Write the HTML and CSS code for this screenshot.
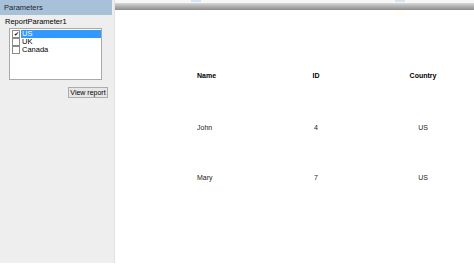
FILE: index.html
```html
<!DOCTYPE html>
<html>
<head>
  <title>Report Viewer</title>
  <link rel="stylesheet" href="styles.css">
</head>
<body>
  <div class="viewer">
    <div class="params">
      <div class="params-head">Parameters</div>
      <div class="param-label">ReportParameter1</div>
      <div class="listbox">
        <div class="item"><span class="check on">&#10004;</span><span class="txt sel">US</span></div>
        <div class="item"><span class="check"></span><span class="txt">UK</span></div>
        <div class="item"><span class="check"></span><span class="txt">Canada</span></div>
      </div>
      <div class="btn-row"><button class="view">View report</button></div>
    </div>
    <div class="report">
      <div class="topstrip"><span class="mark m1"></span><span class="mark m2"></span></div>
      <div class="toolbar"></div>
      <div class="data">
        <div class="cell head name">Name</div>
        <div class="cell head">ID</div>
        <div class="cell head">Country</div>
        <div class="cell name">John</div>
        <div class="cell">4</div>
        <div class="cell">US</div>
        <div class="cell name">Mary</div>
        <div class="cell">7</div>
        <div class="cell">US</div>
      </div>
    </div>
  </div>
</body>
</html>
```
FILE: styles.css
```css
html, body {
  margin: 0;
  padding: 0;
  background: #ffffff;
  font-family: "Liberation Sans", Arial, sans-serif;
  color: #000000;
}
.viewer {
  display: grid;
  grid-template-columns: 115px 1fr;
  height: 270px;
}
.params {
  background: #eeeeee;
  height: 263px;
  border-right: 1px solid #e2e2e2;
}
.params-head {
  height: 15px;
  background: #a9c0d9;
  margin-right: 2px;
  font-size: 7.5px;
  line-height: 15px;
  padding-left: 4px;
  color: #1b2633;
}
.param-label {
  font-size: 7.5px;
  margin: 2px 0 0 5px;
  height: 10px;
  line-height: 10px;
}
.listbox {
  margin: 1px 0 0 9px;
  width: 91px;
  height: 49px;
  background: #ffffff;
  border: 1px solid #a9a9a9;
  padding-top: 1px;
}
.item {
  display: flex;
  align-items: center;
  height: 8px;
  font-size: 7.5px;
  padding-left: 2px;
}
.check {
  width: 6px;
  height: 6px;
  border: 1px solid #8a8a8a;
  background: #ffffff;
  font-size: 6px;
  line-height: 6px;
  text-align: center;
  color: #000000;
  margin-right: 1px;
}
.txt {
  flex: 1;
  height: 8px;
  line-height: 8px;
  padding-left: 1px;
}
.txt.sel {
  background: #3399ff;
  color: #ffffff;
}
.btn-row {
  display: flex;
  justify-content: flex-end;
  padding: 7px 6px 0 0;
}
.view {
  font-family: "Liberation Sans", Arial, sans-serif;
  font-size: 7px;
  height: 11px;
  width: 40px;
  padding: 0;
  background: #e6e6e6;
  border: 1px solid #adadad;
  color: #000000;
}
.report {
  position: relative;
}
.topstrip {
  height: 3px;
  background: #f7f7f7;
}
.mark {
  position: absolute;
  top: 0;
  height: 2px;
  width: 10px;
  background: #d6e4f2;
}
.m1 { left: 76px; }
.m2 { left: 280px; }
.toolbar {
  height: 7px;
  background: linear-gradient(to bottom, #d8d8d8, #b0b0b0 50%, #8c8c8c);
}
.data {
  display: grid;
  grid-template-columns: 111px 108px 106px;
  grid-template-rows: 10px 52px 50px;
  margin: 61px 0 0 36px;
  font-size: 7px;
  color: #222222;
}
.cell {
  line-height: 10px;
  text-align: center;
  align-self: end;
}
.cell.name {
  text-align: left;
  padding-left: 46px;
}
.cell.head {
  font-weight: bold;
  color: #000000;
}
```
